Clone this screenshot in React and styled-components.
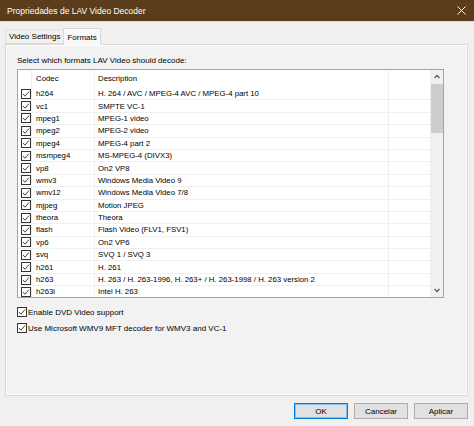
import React from "react";
import styled, { createGlobalStyle } from "styled-components";

const GlobalStyle = createGlobalStyle`
  html, body {
    margin: 0;
    padding: 0;
    background: #f0f0f0;
  }
  body {
    font-family: "Liberation Sans", Arial, sans-serif;
    font-size: 8px;
    color: #000;
  }
  * {
    box-sizing: border-box;
  }
`;

const Window = styled.div`
  width: 474px;
  height: 426px;
  display: flex;
  flex-direction: column;
  background: #f0f0f0;
  overflow: hidden;
`;

const TitleBar = styled.div`
  height: 22px;
  flex: none;
  background: #5b3c1b;
  border-bottom: 1px solid #ead9c6;
  display: flex;
  align-items: center;
  justify-content: space-between;
  padding: 0 7px;
  color: #fff;
  font-size: 8.5px;
`;

const Close = styled.svg`
  width: 9px;
  height: 9px;
  margin-right: 1px;
`;

const TabStrip = styled.div`
  display: flex;
  align-items: flex-end;
  height: 16px;
  margin-top: 6px;
  padding-left: 5px;
`;

const Tab = styled.div`
  height: ${({ active }) => (active ? "17px" : "15px")};
  margin-bottom: ${({ active }) => (active ? "-1px" : "0")};
  margin-left: ${({ active }) => (active ? "-1px" : "0")};
  padding: 0 3px;
  display: flex;
  align-items: center;
  border: 1px solid ${({ active }) => (active ? "#d9d9d9" : "#e3e3e3")};
  border-bottom: ${({ active }) => (active ? "none" : "1px solid #dadada")};
  background: ${({ active }) => (active ? "#f9f9f9" : "#f0f0f0")};
  position: relative;
  z-index: ${({ active }) => (active ? 1 : 0)};
`;

const Panel = styled.div`
  height: 352px;
  margin: 0 6px 0 5px;
  border: 1px solid #dadada;
  box-shadow: inset 1px 1px 0 #fff, inset -1px -1px 0 #fafafa;
  background: #f2f2f2;
  padding: 10px 23px 0 11px;
  display: flex;
  flex-direction: column;
`;

const Label = styled.div`
  height: 12px;
  line-height: 12px;
  margin-bottom: 2px;
`;

const ListBox = styled.div`
  height: 229px;
  border: 1px solid #a3a3a3;
  background: #fff;
  display: flex;
  overflow: hidden;
`;

const Table = styled.div`
  flex: 1;
  display: grid;
  grid-template-columns: 14px 63px 294px 1fr;
  grid-auto-rows: 12.4px;
  grid-template-rows: 18px;
  align-content: start;
  font-size: 7.8px;
`;

const Cell = styled.div`
  display: flex;
  align-items: center;
  padding-left: ${({ pad }) => pad || 0}px;
  border-right: 1px solid #f0f0f0;
  border-bottom: 1px solid ${({ head }) => (head ? "#fff" : "#f0f0f0")};
  white-space: nowrap;
  overflow: hidden;
`;

const Scrollbar = styled.div`
  width: 12px;
  flex: none;
  background: #f0f0f0;
  display: flex;
  flex-direction: column;
  align-items: center;
`;

const Arrow = styled.svg`
  width: 8px;
  height: 13px;
  flex: none;
`;

const Track = styled.div`
  flex: 1;
  width: 100%;
`;

const Thumb = styled.div`
  height: 49px;
  margin-top: 1px;
  background: #cdcdcd;
`;

const Box = styled.span`
  width: 10px;
  height: 10px;
  flex: none;
  border: 1px solid #333;
  background: #fff;
  display: inline-flex;
  margin-left: ${({ offset }) => offset || 0}px;
`;

const Options = styled.div`
  margin-top: 6px;
  display: flex;
  flex-direction: column;
`;

const Option = styled.label`
  height: 16px;
  display: flex;
  align-items: center;
  gap: 1px;
`;

const ButtonRow = styled.div`
  display: flex;
  justify-content: flex-end;
  gap: 6px;
  margin-top: 7px;
  padding-right: 6px;
`;

const Button = styled.button`
  width: 54px;
  height: 16px;
  padding: 0;
  font-family: inherit;
  font-size: 8px;
  color: #000;
  background: #e1e1e1;
  border: 1px solid ${({ primary }) => (primary ? "#0078d7" : "#adadad")};
  box-shadow: ${({ primary }) => (primary ? "inset 0 0 0 1px #8fc0ea" : "none")};
`;

const Check = ({ offset }) => (
  <Box offset={offset}>
    <svg width="8" height="8" viewBox="0 0 8 8">
      <polyline points="1,4 3,6.2 7,1.5" fill="none" stroke="#333" strokeWidth="0.9" />
    </svg>
  </Box>
);

const formats = [
  ["h264", "H. 264 / AVC / MPEG-4 AVC / MPEG-4 part 10"],
  ["vc1", "SMPTE VC-1"],
  ["mpeg1", "MPEG-1 video"],
  ["mpeg2", "MPEG-2 video"],
  ["mpeg4", "MPEG-4 part 2"],
  ["msmpeg4", "MS-MPEG-4 (DIVX3)"],
  ["vp8", "On2 VP8"],
  ["wmv3", "Windows Media Video 9"],
  ["wmv12", "Windows Media Video 7/8"],
  ["mjpeg", "Motion JPEG"],
  ["theora", "Theora"],
  ["flash", "Flash Video (FLV1, FSV1)"],
  ["vp6", "On2 VP6"],
  ["svq", "SVQ 1 / SVQ 3"],
  ["h261", "H. 261"],
  ["h263", "H. 263 / H. 263-1996, H. 263+ / H. 263-1998 / H. 263 version 2"],
  ["h263i", "Intel H. 263"],
];

export default function App() {
  return (
    <Window>
      <GlobalStyle />
      <TitleBar>
        <span>Propriedades de LAV Video Decoder</span>
        <Close viewBox="0 0 9 9">
          <path d="M0.5 0.5 L8.5 8.5 M8.5 0.5 L0.5 8.5" stroke="#fff" strokeWidth="1" />
        </Close>
      </TitleBar>

      <TabStrip>
        <Tab>Video Settings</Tab>
        <Tab active>Formats</Tab>
      </TabStrip>

      <Panel>
        <Label>Select which formats LAV Video should decode:</Label>
        <ListBox>
          <Table>
            <Cell head />
            <Cell head pad={4}>Codec</Cell>
            <Cell head pad={3}>Description</Cell>
            <Cell head />
            {formats.map(([codec, desc]) => (
              <React.Fragment key={codec}>
                <Cell>
                  <Check offset={3} />
                </Cell>
                <Cell pad={4}>{codec}</Cell>
                <Cell pad={3}>{desc}</Cell>
                <Cell />
              </React.Fragment>
            ))}
          </Table>
          <Scrollbar>
            <Arrow viewBox="0 0 8 13">
              <polyline points="1.5,8 4,5.5 6.5,8" fill="none" stroke="#606060" strokeWidth="1.3" />
            </Arrow>
            <Track>
              <Thumb />
            </Track>
            <Arrow viewBox="0 0 8 13">
              <polyline points="1.5,5 4,7.5 6.5,5" fill="none" stroke="#606060" strokeWidth="1.3" />
            </Arrow>
          </Scrollbar>
        </ListBox>

        <Options>
          <Option>
            <Check />
            Enable DVD Video support
          </Option>
          <Option>
            <Check />
            Use Microsoft WMV9 MFT decoder for WMV3 and VC-1
          </Option>
        </Options>
      </Panel>

      <ButtonRow>
        <Button primary>OK</Button>
        <Button>Cancelar</Button>
        <Button>Aplicar</Button>
      </ButtonRow>
    </Window>
  );
}
